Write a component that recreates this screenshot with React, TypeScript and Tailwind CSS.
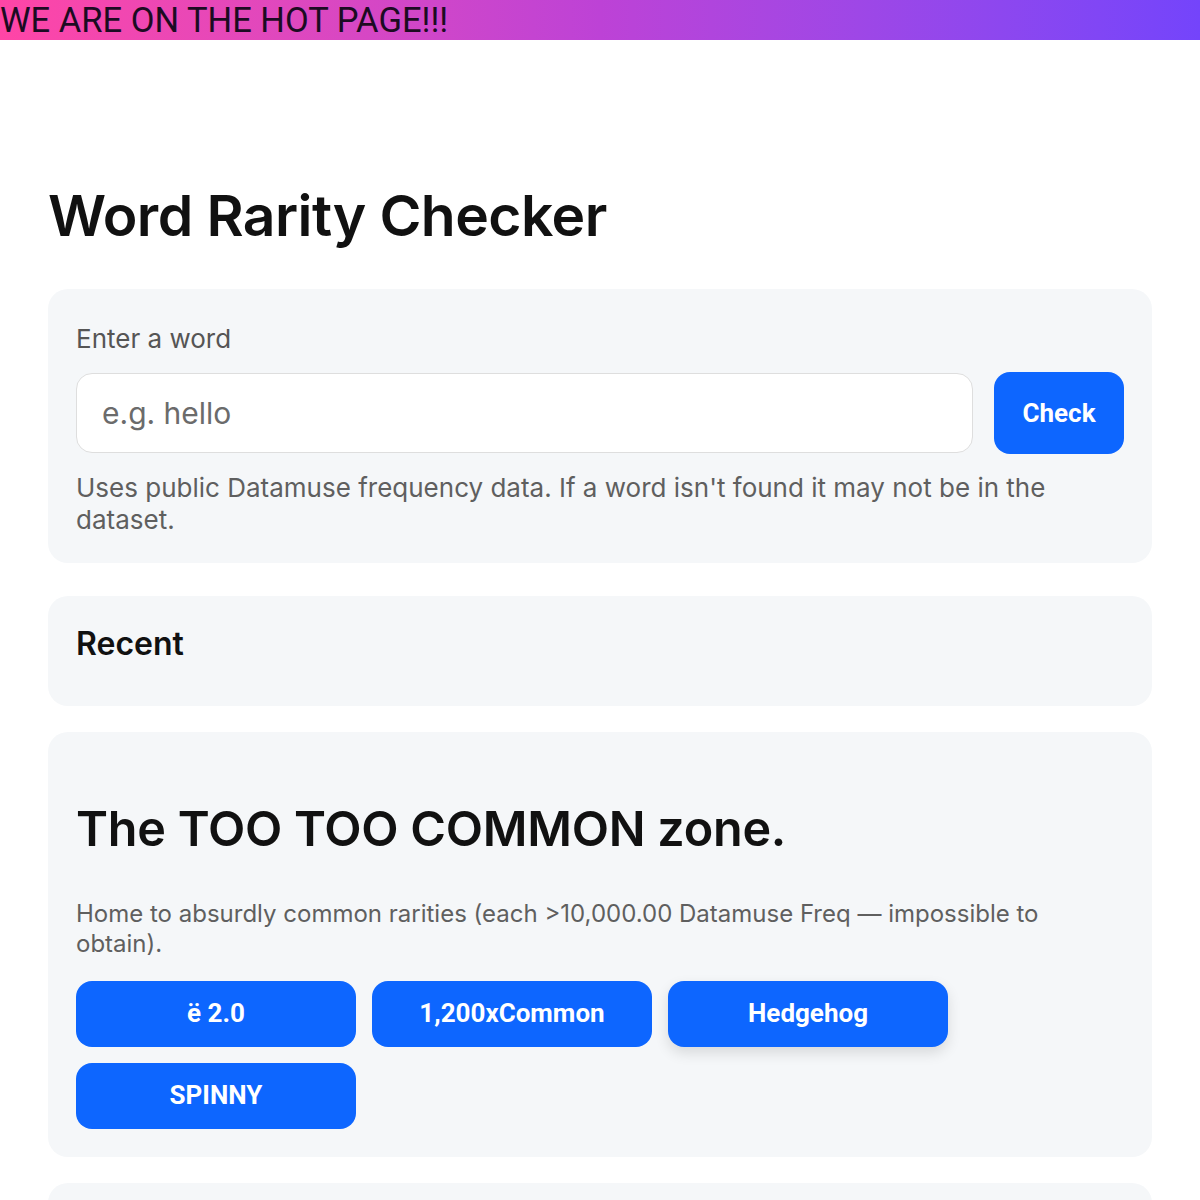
import * as React from 'react'

const zone = ['ë 2.0', '1,200xCommon', 'Hedgehog', 'SPINNY']

export default function App() {
  return (
    <main className="min-h-screen bg-white text-[#111] font-['Inter',sans-serif]">
      {/* Hot page banner */}
      <div className="h-[40px] w-full bg-gradient-to-r from-[#ff45a6] via-[#bd42d6] to-[#7444fb] flex items-center">
        <span className="font-['Roboto',sans-serif] text-[34.5px] leading-none text-[#1c0b22]">WE ARE ON THE HOT PAGE!!!</span>
      </div>

      <div className="px-[48px] pt-[147px]">
        <h1 className="text-[57px] font-semibold leading-none tracking-[-0.01em] mb-[45px]">Word Rarity Checker</h1>

        {/* Search card */}
        <section className="rounded-[20px] bg-[#f5f7f9] px-[28px] pt-[37px] pb-[27px] mb-[33px]">
          <label className="block text-[26px] leading-none text-[#555] mb-[20px]">Enter a word</label>
          <div className="flex items-center gap-[21px]">
            <input
              className="flex-1 h-[80px] rounded-[16px] border border-[#dedede] bg-white px-[25px] text-[30px] placeholder:text-[#6b6b6b] outline-none"
              placeholder="e.g. hello"
            />
            <button className="h-[82px] w-[130px] rounded-[16px] bg-[#0d66ff] text-white font-['Roboto',sans-serif] font-bold text-[26px]">
              Check
            </button>
          </div>
          <p className="mt-[18px] text-[26px] leading-[32px] text-[#5f5f5f] pr-[40px]">
            Uses public Datamuse frequency data. If a word isn't found it may not be in the dataset.
          </p>
        </section>

        {/* Recent lookups */}
        <section className="rounded-[20px] bg-[#f5f7f9] px-[28px] pt-[32px] h-[110px] mb-[26px]">
          <h2 className="text-[32px] font-semibold leading-none">Recent</h2>
        </section>

        {/* Common zone */}
        <section className="rounded-[20px] bg-[#f5f7f9] px-[28px] pt-[73px] pb-[28px] mb-[26px]">
          <h2 className="text-[48.5px] font-semibold leading-none tracking-[-0.005em]">The TOO TOO COMMON zone.</h2>
          <p className="mt-[45px] text-[24px] leading-[30px] text-[#5f5f5f] pr-[60px]">
            Home to absurdly common rarities (each &gt;10,000.00 Datamuse Freq — impossible to obtain).
          </p>
          <div className="mt-[22px] flex flex-wrap gap-[16px]">
            {zone.map((w) => (
              <button
                key={w}
                className={
                  'h-[66px] w-[280px] rounded-[16px] bg-[#0d66ff] text-white font-[Roboto,sans-serif] font-bold text-[26px] ' +
                  (w === 'Hedgehog' ? 'shadow-[0_6px_14px_rgba(0,0,0,0.12)]' : '')
                }
              >
                {w}
              </button>
            ))}
          </div>
        </section>

        <section className="rounded-[20px] bg-[#f5f7f9] h-[120px]" />
      </div>
    </main>
  )
}
